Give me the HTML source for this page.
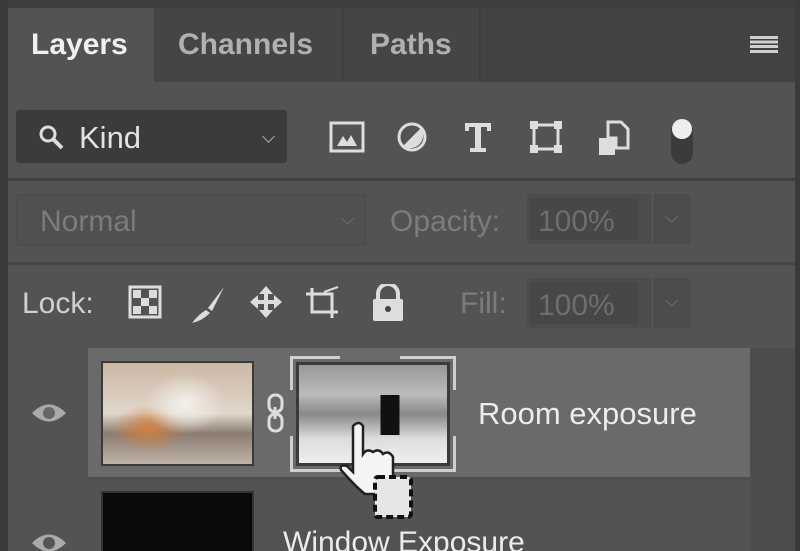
<!DOCTYPE html>
<html style="width:800px;height:551px;overflow:hidden"><head><meta charset="utf-8"><style>
*{margin:0;padding:0;box-sizing:border-box}
body{width:800px;height:551px;overflow:hidden;background:#535353;font-family:"Liberation Sans",sans-serif;position:relative}
.a{position:absolute}
.t{position:absolute;font-size:29px;color:#bdbdbd;font-weight:bold}
.chev{position:absolute;width:9px;height:9px;border-right:1.5px solid #6a6a6a;border-bottom:1.5px solid #6a6a6a;transform:rotate(45deg)}
</style></head><body>
<div class="a" style="left:0;top:0;width:800px;height:82px;background:#3e3e3e"></div>
<div class="a" style="left:0;top:0;width:8px;height:551px;background:#3a3a3a"></div>
<div class="a" style="left:795px;top:0;width:5px;height:551px;background:#3a3a3a"></div>
<div class="a" style="left:8px;top:8px;width:146px;height:76px;background:#535353"></div>
<div class="a" style="left:155px;top:8px;width:187px;height:74px;background:#454545"></div>
<div class="a" style="left:344px;top:8px;width:135px;height:74px;background:#454545"></div>
<div class="a" style="left:481px;top:8px;width:314px;height:74px;background:#424242"></div>
<div class="t" style="left:31px;top:28px;color:#f0f0f0;font-size:30px">Layers</div>
<div class="t" style="left:178px;top:28px;color:#b0b0b0;font-size:30px">Channels</div>
<div class="t" style="left:370px;top:28px;color:#b0b0b0;font-size:30px">Paths</div>
<div class="a" style="left:750px;top:36px;width:28px;height:17px;background:repeating-linear-gradient(#cfcfcf 0 3px,transparent 3px 4.6px)"></div>

<div class="a" style="left:16px;top:110px;width:271px;height:53px;background:#3b3b3b;border-radius:3px"></div>
<svg class="a" style="left:37px;top:123px" width="30" height="30" viewBox="0 0 30 30"><circle cx="11" cy="11" r="7" fill="none" stroke="#ddd" stroke-width="3"/><path d="M16 16 L25 25" stroke="#ddd" stroke-width="4"/></svg>
<div class="a" style="left:79px;top:120px;font-size:31px;color:#e2e2e2">Kind</div>
<div class="chev" style="left:264px;top:132px;border-color:#aaa"></div>
<svg class="a" style="left:328px;top:118px" width="380" height="50" viewBox="0 0 380 50">
<rect x="3" y="5" width="32" height="28" fill="none" stroke="#ddd" stroke-width="3"/><path d="M9 28 L15 18 L19 24 L23 17 L29 28Z" fill="#ddd"/>
<circle cx="84" cy="19" r="13" fill="none" stroke="#ddd" stroke-width="3"/><path d="M93 10 A13 13 0 0 1 75 28Z" fill="#ddd"/>
<path d="M137 5 H163 V13 H159 V9 H153 V30 H158 V34 H142 V30 H147 V9 H141 V13 H137Z" fill="#ddd"/>
<rect x="206" y="7" width="24" height="24" fill="none" stroke="#ddd" stroke-width="3"/><g fill="#ddd"><rect x="202" y="3" width="8" height="8"/><rect x="226" y="3" width="8" height="8"/><rect x="202" y="27" width="8" height="8"/><rect x="226" y="27" width="8" height="8"/></g>
<path d="M280 4 H293 L300 11 V30 H288 V20 H280Z" fill="none" stroke="#ddd" stroke-width="3"/><rect x="271" y="20" width="16" height="17" fill="#ddd"/>
<rect x="343" y="2" width="22" height="44" rx="11" fill="#3b3b3b"/><circle cx="354" cy="11" r="10" fill="#eee"/>
</svg>
<div class="a" style="left:8px;top:178px;width:787px;height:3px;background:#404040"></div>

<div class="a" style="left:16px;top:194px;width:350px;height:52px;background:#505050;border:1px solid #4a4a4a;border-radius:3px"></div>
<div class="chev" style="left:343px;top:214px"></div>
<div class="a" style="left:40px;top:205px;font-size:30px;color:#7c7c7c">Normal</div>
<div class="a" style="left:390px;top:205px;font-size:30px;color:#7c7c7c">Opacity:</div>
<div class="a" style="left:527px;top:194px;width:164px;height:50px;background:#4c4c4c;border-radius:3px"></div>
<div class="a" style="left:530px;top:198px;width:108px;height:42px;background:#474747"></div>
<div class="a" style="left:652px;top:194px;width:1px;height:50px;background:#5a5a5a"></div>
<div class="chev" style="left:667px;top:212px"></div>
<div class="a" style="left:538px;top:205px;font-size:30px;color:#6e6e6e">100%</div>
<div class="a" style="left:8px;top:262px;width:787px;height:3px;background:#454545"></div>

<div class="a" style="left:22px;top:287px;font-size:30px;color:#d0d0d0">Lock:</div>
<svg class="a" style="left:128px;top:284px" width="280" height="40" viewBox="0 0 280 40">
<rect x="2" y="3" width="30" height="30" fill="none" stroke="#ddd" stroke-width="3"/><g fill="#ddd"><rect x="5" y="6" width="8" height="8"/><rect x="21" y="6" width="8" height="8"/><rect x="13" y="14" width="8" height="8"/><rect x="5" y="22" width="8" height="8"/><rect x="21" y="22" width="8" height="8"/></g>
<path d="M96 3 L80 24 L84 27 Z M78 26 Q71 30 64 39 Q74 37 82 29Z" fill="#ddd"/>
<path d="M138 2 L131 10 H136 V16 H130 V11 L122 18 L130 25 V20 H136 V26 H131 L138 34 L145 26 H140 V20 H146 V25 L154 18 L146 11 V16 H140 V10 H145Z" fill="#ddd"/>
<path d="M184 4 V28 H210 M178 10 H204 V34" fill="none" stroke="#ddd" stroke-width="3"/><path d="M196 8 L210 3" stroke="#ddd" stroke-width="2"/>
<path d="M250 16 V10 A10 10 0 0 1 270 10 V16" fill="none" stroke="#ddd" stroke-width="4"/><rect x="245" y="15" width="30" height="22" rx="2" fill="#ddd"/><circle cx="260" cy="25" r="3" fill="#444"/>
</svg>
<div class="a" style="left:460px;top:287px;font-size:30px;color:#7c7c7c">Fill:</div>
<div class="a" style="left:527px;top:278px;width:164px;height:50px;background:#4c4c4c;border-radius:3px"></div>
<div class="a" style="left:530px;top:282px;width:108px;height:42px;background:#474747"></div>
<div class="a" style="left:652px;top:278px;width:1px;height:50px;background:#5a5a5a"></div>
<div class="chev" style="left:667px;top:296px"></div>
<div class="a" style="left:538px;top:289px;font-size:30px;color:#6e6e6e">100%</div>

<div class="a" style="left:750px;top:348px;width:45px;height:203px;background:#4d4d4d"></div>
<div class="a" style="left:88px;top:348px;width:662px;height:129px;background:#6a6a6a"></div>
<div class="a" style="left:88px;top:477px;width:662px;height:3px;background:#4e4e4e"></div>
<svg class="a" style="left:30px;top:400px" width="38" height="26" viewBox="0 0 38 26"><path d="M2 13 Q19 -4 36 13 Q19 30 2 13Z" fill="#aaa"/><circle cx="19" cy="13" r="6" fill="#666"/></svg>
<svg class="a" style="left:30px;top:530px" width="38" height="21" viewBox="0 0 38 21"><path d="M2 13 Q19 -4 36 13 Q19 30 2 13Z" fill="#aaa"/><circle cx="19" cy="13" r="6" fill="#555"/></svg>

<div class="a" style="left:101px;top:361px;width:153px;height:105px;background:#3a3a3a;padding:2px">
<div style="width:100%;height:100%;background:radial-gradient(ellipse at 55% 40%,#f4f0ea 0%,transparent 35%),radial-gradient(ellipse at 30% 65%,#d08040 0%,transparent 25%),linear-gradient(180deg,#cbb8a4 0%,#d8cabb 30%,#e0d8cc 50%,#8a7c70 70%,#c0b4a8 100%)"></div></div>
<svg class="a" style="left:265px;top:393px" width="22" height="40" viewBox="0 0 22 40"><rect x="4" y="2" width="13" height="17" rx="6" fill="none" stroke="#ddd" stroke-width="3"/><rect x="4" y="21" width="13" height="17" rx="6" fill="none" stroke="#ddd" stroke-width="3"/><path d="M10 14V26" stroke="#ddd" stroke-width="3"/></svg>
<div class="a" style="left:290px;top:356px;width:166px;height:116px;border:3px solid #cfcfcf"></div>
<div class="a" style="left:340px;top:353px;width:60px;height:8px;background:#6a6a6a"></div>
<div class="a" style="left:287px;top:390px;width:8px;height:46px;background:#6a6a6a"></div>
<div class="a" style="left:451px;top:390px;width:8px;height:46px;background:#6a6a6a"></div>
<div class="a" style="left:296px;top:362px;width:154px;height:104px;background:#3a3a3a;padding:3px">
<div style="width:100%;height:100%;background:linear-gradient(90deg,transparent 0 55%,#111 55% 68%,transparent 68%) 0 30px/100% 40px no-repeat,linear-gradient(180deg,#999 0%,#bbb 30%,#888 50%,#ddd 75%,#eee 100%)"></div></div>
<div class="a" style="left:478px;top:396px;font-size:31px;color:#ececec">Room exposure</div>

<div class="a" style="left:101px;top:491px;width:153px;height:60px;background:#333;padding:2px 2px 0"><div style="width:100%;height:100%;background:#0a0a0a"></div></div>
<div class="a" style="left:283px;top:526px;font-size:30px;color:#ececec">Window Exposure</div>

<svg class="a" style="left:335px;top:420px" width="85" height="105" viewBox="0 0 85 105">
<path d="M18 6 Q24 0 28 6 V34 Q32 28 38 32 Q44 28 48 34 Q54 30 58 37 V58 Q56 72 42 74 H30 Q22 68 6 50 Q4 44 12 46 L18 52Z" fill="#f4f4f4" stroke="#222" stroke-width="2.5"/>
<rect x="40" y="57" width="36" height="40" rx="3" fill="#e6e6e6" stroke="#111" stroke-width="4" stroke-dasharray="7 4"/>
</svg>
</body></html>
